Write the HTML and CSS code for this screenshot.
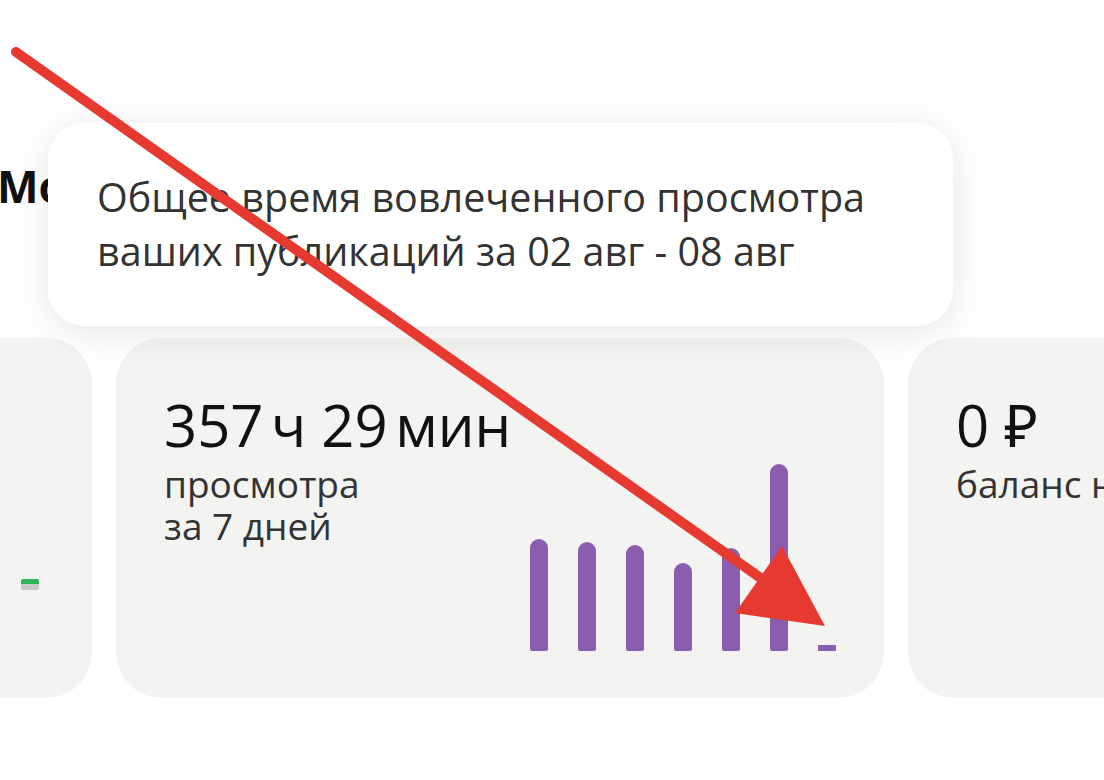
FILE: index.html
```html
<!DOCTYPE html>
<html lang="ru">
<head>
<meta charset="utf-8">
<title>Статистика</title>
<link rel="stylesheet" href="styles.css">
</head>
<body>
<div class="page">
  <h1 class="heading">Монетизация</h1>
  <div class="cards">
    <div class="card">
      <div class="card-text"></div>
      <div class="chart chart-small">
        <div class="dash"><span class="dash-top"></span><span class="dash-bottom"></span></div>
      </div>
    </div>
    <div class="card">
      <div class="card-text">
        <div class="value">357&#8239;ч 29&#8239;мин</div>
        <div class="label">просмотра<br>за 7 дней</div>
      </div>
      <div class="chart">
        <span class="bar" style="height:112px"></span>
        <span class="bar" style="height:109px"></span>
        <span class="bar" style="height:106px"></span>
        <span class="bar" style="height:88px"></span>
        <span class="bar" style="height:103px"></span>
        <span class="bar" style="height:187px"></span>
        <span class="bar bar-min" style="height:6px"></span>
      </div>
    </div>
    <div class="card">
      <div class="card-text">
        <div class="value">0 ₽</div>
        <div class="label">баланс на счёте</div>
      </div>
    </div>
  </div>

  <div class="tooltip">Общее время вовлеченного просмотра<br>ваших публикаций за 02 авг - 08 авг</div>

  <svg class="arrow" width="1104" height="780" viewBox="0 0 1104 780" aria-hidden="true">
    <line x1="16" y1="52" x2="772" y2="586" stroke="#e63a30" stroke-width="10" stroke-linecap="round"/>
    <polygon points="782,546 735,613 825,626" fill="#e63a30"/>
  </svg>
</div>
</body>
</html>
```

FILE: styles.css
```css
* { box-sizing: border-box; }

html, body {
  margin: 0;
  padding: 0;
  background: #ffffff;
  overflow: hidden;
}

body {
  width: 1104px;
  height: 780px;
  font-family: "Open Sans", "Noto Sans", sans-serif;
  color: #111;
}

.page {
  position: relative;
  width: 1104px;
  height: 780px;
  padding-top: 158px;
}

.heading {
  margin: 0 0 0 -3px;
  font-size: 44px;
  font-weight: 700;
  line-height: 56px;
  color: #111;
  white-space: nowrap;
}

.cards {
  display: flex;
  gap: 24px;
  margin-top: 124px;
  margin-left: -676px;
}

.card {
  flex: 0 0 768px;
  height: 360px;
  background: #f3f3f2;
  border-radius: 46px;
  padding: 55px 48px 47px 48px;
  display: flex;
  justify-content: space-between;
  align-items: flex-end;
  overflow: hidden;
}

.card-text {
  align-self: flex-start;
}

.value {
  font-size: 58px;
  line-height: 64px;
  font-weight: 400;
  color: #111;
  white-space: nowrap;
}

.label {
  margin-top: 6px;
  font-size: 37px;
  line-height: 42px;
  color: #333;
  white-space: nowrap;
}

.chart {
  display: flex;
  align-items: flex-end;
  gap: 30px;
  flex-shrink: 0;
}

.bar {
  width: 18px;
  background: #8a5dae;
  border-radius: 9px 9px 2px 2px;
}

.bar-min {
  border-radius: 1px;
}

.chart-small {
  margin-bottom: 61px;
  margin-right: 5px;
}

.dash {
  display: flex;
  flex-direction: column;
  width: 18px;
}

.dash-top {
  height: 5px;
  background: #2fb457;
  border-radius: 2px 2px 0 0;
}

.dash-bottom {
  height: 6px;
  background: #cbc6cb;
  border-radius: 0 0 2px 2px;
}

.tooltip {
  position: absolute;
  left: 48px;
  top: 123px;
  width: 905px;
  height: 203px;
  background: #ffffff;
  border-radius: 36px;
  box-shadow: 0 6px 40px rgba(0, 0, 0, 0.10);
  padding: 47px 40px 0 49px;
  font-size: 39.5px;
  line-height: 54px;
  color: #333;
  white-space: nowrap;
}

.arrow {
  position: absolute;
  left: 0;
  top: 0;
  pointer-events: none;
}
```
